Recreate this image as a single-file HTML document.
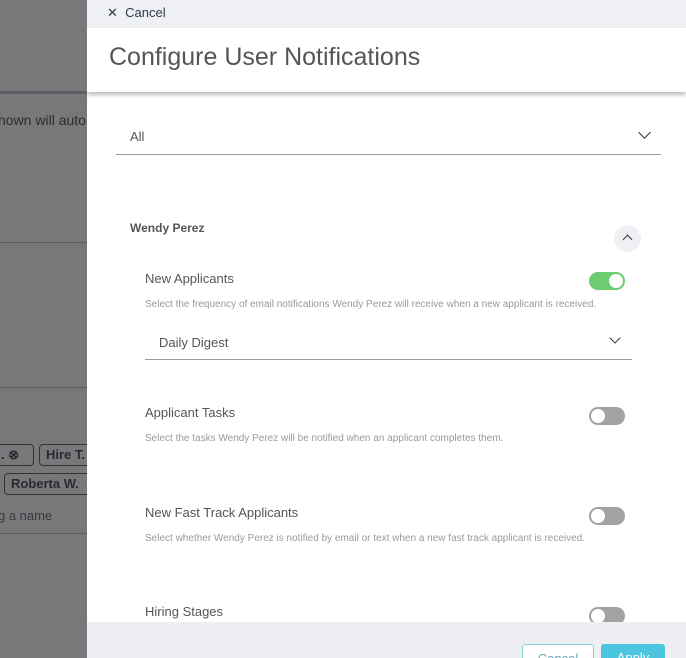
<!DOCTYPE html>
<html><head><style>
*{margin:0;padding:0;box-sizing:border-box}
html,body{width:686px;height:658px;overflow:hidden}
body{position:relative;font-family:"Liberation Sans",Arial,sans-serif;background:#78787b}
.abs{position:absolute}
.left{left:0;top:0;width:87px;height:658px;background:#78787b;color:#2d2d30;overflow:hidden}
.hl{position:absolute;left:0;width:87px;height:1px;background:#5e5e62}
.chip{position:absolute;border:1px solid #333;border-radius:4px;font-size:13px;font-weight:bold;color:#2a2a30;padding:2px 6px;height:22px;white-space:nowrap}
.panel{left:87px;top:0;width:599px;height:658px;background:#fff;overflow:hidden}
.t{position:absolute;color:#555;font-size:13px}
.d{position:absolute;color:#9a9a9a;font-size:10px}
.tg{position:absolute;width:36px;height:18px;border-radius:9px;background:#a3a3a3}
.tg::after{content:"";position:absolute;left:2px;top:2px;width:14px;height:14px;border-radius:50%;background:#fff}
.tg.on{background:#6dcb72}
.tg.on::after{left:20px}
.chev{position:absolute;width:9px;height:9px;border-right:1.5px solid #334;border-bottom:1.5px solid #334;transform:rotate(45deg)}
</style></head><body>
<div class="abs left">
 <div class="hl" style="top:91px;height:3px"></div>
 <div class="abs" style="left:-2px;top:112px;font-size:14px;white-space:nowrap">hown will auto</div>
 <div class="hl" style="top:242px"></div>
 <div class="hl" style="top:387px"></div>
 <div class="chip" style="left:-6px;top:444px;width:40px">.&nbsp;⊗</div>
 <div class="chip" style="left:39px;top:444px;width:60px">Hire T.</div>
 <div class="chip" style="left:4px;top:473px;width:90px">Roberta W.</div>
 <div class="abs" style="left:-2px;top:508px;font-size:13px;color:#3a3a3e;white-space:nowrap">g a name</div>
 <div class="hl" style="top:533px"></div>
</div>
<div class="abs panel">
 <div class="abs" style="left:0;top:0;width:599px;height:28px;background:#eef0f3;font-size:13px;color:#2d3a4a;padding:5px 0 0 20px">✕&nbsp;&nbsp;Cancel</div>
 <div class="abs" style="left:0;top:28px;width:599px;height:64px;background:#fff;box-shadow:0 3px 4px rgba(0,0,0,.25)">
  <div class="abs" style="left:22px;top:15px;font-size:25px;color:#555">Configure User Notifications</div>
 </div>
 <div class="t" style="left:43px;top:129px">All</div>
 <div class="chev" style="left:553px;top:128px"></div>
 <div class="abs" style="left:29px;top:154px;width:545px;height:1px;background:#999"></div>
 <div class="abs" style="left:43px;top:221px;font-size:12px;font-weight:bold;color:#555">Wendy Perez</div>
 <div class="abs" style="left:527px;top:225px;width:27px;height:27px;border-radius:50%;background:#eef0f3"></div>
 <div class="chev" style="left:537px;top:236px;transform:rotate(225deg);width:7px;height:7px;border-width:1.2px"></div>
 <div class="t" style="left:58px;top:271px">New Applicants</div>
 <div class="tg on" style="left:502px;top:272px"></div>
 <div class="d" style="left:58px;top:299px">Select the frequency of email notifications Wendy Perez will receive when a new applicant is received.</div>
 <div class="t" style="left:72px;top:335px">Daily Digest</div>
 <div class="chev" style="left:524px;top:334px;width:8px;height:8px"></div>
 <div class="abs" style="left:58px;top:359px;width:487px;height:1px;background:#999"></div>
 <div class="t" style="left:58px;top:405px">Applicant Tasks</div>
 <div class="tg" style="left:502px;top:407px"></div>
 <div class="d" style="left:58px;top:433px">Select the tasks Wendy Perez will be notified when an applicant completes them.</div>
 <div class="t" style="left:58px;top:505px">New Fast Track Applicants</div>
 <div class="tg" style="left:502px;top:507px"></div>
 <div class="d" style="left:58px;top:533px">Select whether Wendy Perez is notified by email or text when a new fast track applicant is received.</div>
 <div class="t" style="left:58px;top:604px">Hiring Stages</div>
 <div class="tg" style="left:502px;top:607px"></div>
 <div class="abs" style="left:0;top:622px;width:599px;height:36px;background:#eeeff2;overflow:hidden">
  <div class="abs" style="left:435px;top:22px;width:72px;height:24px;border:1px solid #8ccfdc;border-radius:3px;background:#fff;color:#6ab;font-size:13px;text-align:center;padding-top:6px">Cancel</div>
  <div class="abs" style="left:514px;top:22px;width:64px;height:24px;border-radius:3px;background:#4cc6de;color:#fff;font-size:13px;text-align:center;padding-top:6px">Apply</div>
 </div>
</div>
</body></html>
